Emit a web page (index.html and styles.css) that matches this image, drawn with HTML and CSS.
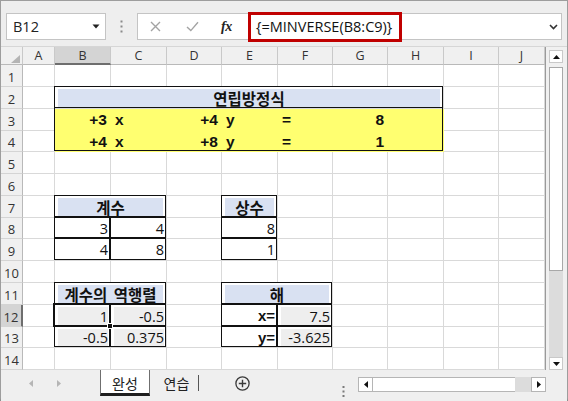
FILE: index.html
```html
<!DOCTYPE html>
<html lang="ko">
<head>
<meta charset="utf-8">
<link rel="stylesheet" href="styles.css">
</head>
<body>
<div class="window">
  <div class="toolbar">
    <div class="namebox"><span class="ref">B12</span>
      <svg class="nb-arrow" width="8" height="5" viewBox="0 0 8 5"><path d="M0.5 0.5H7.5L4 4.5Z" fill="#222"/></svg>
    </div>
    <div class="grip"><svg width="3" height="13" viewBox="0 0 3 13"><rect x="0.5" y="0.5" width="2" height="2" fill="#8a8a8a"/><rect x="0.5" y="5.5" width="2" height="2" fill="#8a8a8a"/><rect x="0.5" y="10.5" width="2" height="2" fill="#8a8a8a"/></svg></div>
    <div class="fnbox">
      <svg class="ic-x" width="11" height="11" viewBox="0 0 11 11"><path d="M1 1L10 10M10 1L1 10" stroke="#a3a3a3" stroke-width="1.4"/></svg>
      <svg class="ic-ok" width="13" height="11" viewBox="0 0 13 11"><path d="M1 6L4.8 9.6L12 1.2" stroke="#a3a3a3" stroke-width="1.4" fill="none"/></svg>
      <span class="fx">fx</span>
    </div>
    <div class="formula">
      <span class="ftext">{=MINVERSE(B8:C9)}</span>
      <svg class="f-arrow" width="9" height="6" viewBox="0 0 9 6"><path d="M1 1L4.5 4.5L8 1" stroke="#333" stroke-width="1.6" fill="none"/></svg>
    </div>
  </div>

  <div class="main">
    <div class="sheet">
      <!-- column headers -->
      <div class="corner"><svg width="22" height="18" viewBox="0 0 22 18"><path d="M19 8V16H10Z" fill="#b4b4b4"/></svg></div>
      <div class="ch">A</div><div class="ch sel">B</div><div class="ch">C</div><div class="ch">D</div><div class="ch">E</div><div class="ch">F</div><div class="ch">G</div><div class="ch">H</div><div class="ch">I</div><div class="ch">J</div>

      <!-- row 1 -->
      <div class="rh">1</div><div class="c"></div><div class="c"></div><div class="c"></div><div class="c"></div><div class="c"></div><div class="c"></div><div class="c"></div><div class="c"></div><div class="c"></div><div class="c"></div>
      <!-- row 2 -->
      <div class="rh">2</div><div class="c"></div><div class="c hd span7 bx">연립방정식</div><div class="c"></div><div class="c"></div>
      <!-- row 3 -->
      <div class="rh">3</div><div class="c"></div>
      <div class="c y eq r edge e-l">+3</div><div class="c y eq l">x</div><div class="c y eq r">+4</div><div class="c y eq l">y</div><div class="c y eq l">=</div><div class="c y eq r">8</div><div class="c y edge e-r"></div>
      <div class="c"></div><div class="c"></div>
      <!-- row 4 -->
      <div class="rh">4</div><div class="c"></div>
      <div class="c y eq r edge e-l e-b">+4</div><div class="c y eq l edge e-b">x</div><div class="c y eq r edge e-b">+8</div><div class="c y eq l edge e-b">y</div><div class="c y eq l edge e-b">=</div><div class="c y eq r edge e-b">1</div><div class="c y edge e-r e-b"></div>
      <div class="c"></div><div class="c"></div>
      <!-- row 5 -->
      <div class="rh">5</div><div class="c"></div><div class="c"></div><div class="c"></div><div class="c"></div><div class="c"></div><div class="c"></div><div class="c"></div><div class="c"></div><div class="c"></div><div class="c"></div>
      <!-- row 6 -->
      <div class="rh">6</div><div class="c"></div><div class="c"></div><div class="c"></div><div class="c"></div><div class="c"></div><div class="c"></div><div class="c"></div><div class="c"></div><div class="c"></div><div class="c"></div>
      <!-- row 7 -->
      <div class="rh">7</div><div class="c"></div><div class="c hd span2 bx">계수</div><div class="c"></div><div class="c hd bx">상수</div><div class="c"></div><div class="c"></div><div class="c"></div><div class="c"></div><div class="c"></div>
      <!-- row 8 -->
      <div class="rh">8</div><div class="c"></div><div class="c num r bx">3</div><div class="c num r bx">4</div><div class="c"></div><div class="c num r bx">8</div><div class="c"></div><div class="c"></div><div class="c"></div><div class="c"></div><div class="c"></div>
      <!-- row 9 -->
      <div class="rh">9</div><div class="c"></div><div class="c num r bx">4</div><div class="c num r bx">8</div><div class="c"></div><div class="c num r bx">1</div><div class="c"></div><div class="c"></div><div class="c"></div><div class="c"></div><div class="c"></div>
      <!-- row 10 -->
      <div class="rh">10</div><div class="c"></div><div class="c"></div><div class="c"></div><div class="c"></div><div class="c"></div><div class="c"></div><div class="c"></div><div class="c"></div><div class="c"></div><div class="c"></div>
      <!-- row 11 -->
      <div class="rh">11</div><div class="c"></div><div class="c hd span2 bx">계수의 역행렬</div><div class="c"></div><div class="c hd span2 bx">해</div><div class="c"></div><div class="c"></div><div class="c"></div><div class="c"></div>
      <!-- row 12 -->
      <div class="rh sel">12</div><div class="c"></div>
      <div class="c num r g bx">1<span class="selection"><span class="handle"></span></span></div>
      <div class="c num r g bx">-0.5</div><div class="c"></div><div class="c var r bx">x=</div><div class="c num r g bx">7.5</div><div class="c"></div><div class="c"></div><div class="c"></div><div class="c"></div>
      <!-- row 13 -->
      <div class="rh">13</div><div class="c"></div><div class="c num r g bx">-0.5</div><div class="c num r g bx">0.375</div><div class="c"></div><div class="c var r bx">y=</div><div class="c num r g bx">-3.625</div><div class="c"></div><div class="c"></div><div class="c"></div><div class="c"></div>
      <!-- row 14 -->
      <div class="rh">14</div><div class="c"></div><div class="c"></div><div class="c"></div><div class="c"></div><div class="c"></div><div class="c"></div><div class="c"></div><div class="c"></div><div class="c"></div><div class="c"></div>
    </div>

    <div class="vscroll">
      <div class="sbtn"><svg width="7" height="4" viewBox="0 0 7 4"><path d="M0 4H7L3.5 0Z" fill="#111"/></svg></div>
      <div class="vthumb"></div>
      <div class="vtrack"></div>
      <div class="sbtn"><svg width="7" height="4" viewBox="0 0 7 4"><path d="M0 0H7L3.5 4Z" fill="#111"/></svg></div>
    </div>
  </div>

  <div class="tabbar">
    <div class="navs">
      <svg width="4" height="7" viewBox="0 0 4 7"><path d="M4 0V7L0 3.5Z" fill="#b5b5b5"/></svg>
      <svg width="4" height="7" viewBox="0 0 4 7"><path d="M0 0V7L4 3.5Z" fill="#b5b5b5"/></svg>
    </div>
    <div class="tab active">완성</div>
    <div class="tab">연습</div>
    <div class="tsep"></div>
    <svg class="addsheet" width="15" height="15" viewBox="0 0 15 15"><circle cx="7.5" cy="7.5" r="6.6" stroke="#3a3a3a" stroke-width="1.3" fill="none"/><path d="M7.5 3.8V11.2M3.8 7.5H11.2" stroke="#3a3a3a" stroke-width="1.4"/></svg>
    <div class="tgrip"><svg width="3" height="11" viewBox="0 0 3 11"><rect x="0.5" y="0" width="2" height="2" fill="#7a7a7a"/><rect x="0.5" y="4.5" width="2" height="2" fill="#7a7a7a"/><rect x="0.5" y="9" width="2" height="2" fill="#7a7a7a"/></svg></div>
    <div class="hscroll">
      <div class="hbtn"><svg width="4" height="7" viewBox="0 0 4 7"><path d="M4 0V7L0 3.5Z" fill="#111"/></svg></div>
      <div class="hthumb"></div>
      <div class="htrack"></div>
      <div class="hbtn"><svg width="4" height="7" viewBox="0 0 4 7"><path d="M0 0V7L4 3.5Z" fill="#111"/></svg></div>
    </div>
  </div>
</div>
</body>
</html>
```

FILE: styles.css
```css
* { box-sizing: border-box; margin: 0; padding: 0; }
html, body { width: 568px; height: 401px; overflow: hidden; }
body { font-family: "Open Sans", "Noto Sans CJK KR", sans-serif; background: #fff; color: #111; }

.window {
  width: 568px; height: 401px;
  border: 1px solid #9d9d9d; border-bottom: 3px solid #8a8a8a;
  display: flex; flex-direction: column;
  background: #f0f0f0;
}

/* ---------- formula toolbar ---------- */
.toolbar {
  height: 46px; flex: none;
  display: flex; align-items: flex-start;
  padding: 12px 5px 0 5px;
  background: #eeeeee;
  border-bottom: 1px solid #d6d6d6;
}
.namebox {
  width: 100px; height: 27px;
  background: #fff; border: 1px solid #c4c4c4;
  display: flex; align-items: center; justify-content: space-between;
  padding: 0 5px 0 6px;
  font-size: 14.5px; color: #222;
}
.grip { width: 4px; height: 27px; margin-left: 14px; display: flex; align-items: center; }
.fnbox {
  width: 112px; height: 27px; margin-left: 13px; margin-right: -1px;
  background: #fff; border: 1px solid #c4c4c4;
  display: flex; align-items: center;
  padding-left: 12px;
}
.ic-ok { margin-left: 25px; }
.fx {
  margin-left: 22px;
  font-family: "Liberation Serif", serif; font-style: italic; font-weight: bold;
  font-size: 14px; color: #222; letter-spacing: -0.5px;
}
.formula {
  flex: 1; height: 27px;
  background: #fff; border: 1px solid #c4c4c4;
  display: flex; align-items: flex-start; justify-content: space-between;
  padding-right: 3px;
}
.ftext {
  height: 30px; margin: -2px 0 0 -1px;
  border: 3px solid #c00000;
  padding: 0 7px 0 5px;
  font-size: 14.5px; line-height: 24px; color: #111;
}
.f-arrow { align-self: center; }

/* ---------- sheet grid ---------- */
.main { height: 323px; flex: none; display: flex; }
.sheet {
  width: 544px; height: 323px;
  display: grid;
  grid-template-columns: 22px 32px 56px 56px 55px 56px 55px 55px 56px 55px 46px;
  grid-template-rows: 18px 22px 22px 22px 21px 22px 22px 22px 21px 22px 22px 22px 22px 21px 22px;
  background: #fff;
}
.corner, .ch {
  background: #f0f0f0;
  border-right: 1px solid #c9c9c9; border-bottom: 1px solid #b9b9b9;
}
.ch {
  font-size: 12.5px; color: #333;
  display: flex; align-items: center; justify-content: center;
}
.ch.sel { background: #d4d4d4; border-bottom: 2px solid #6e6e6e; }
.rh {
  background: #f0f0f0;
  border-right: 1px solid #b9b9b9; border-bottom: 1px solid #d4d4d4;
  font-size: 13px; color: #333;
  display: flex; align-items: center; justify-content: center;
  padding-top: 2px;
}
.rh.sel { background: #d4d4d4; border-right: 2px solid #6e6e6e; }

.c {
  border-right: 1px solid #d9d9d9; border-bottom: 1px solid #d9d9d9;
  display: flex; align-items: center;
  font-size: 15px; white-space: nowrap;
}
.c.r { justify-content: flex-end; padding-right: 2px; }
.c.l { justify-content: flex-start; padding-left: 3px; }
.span2 { grid-column: span 2; }
.span7 { grid-column: span 7; }

.hd {
  justify-content: center;
  font-family: "Noto Sans CJK KR", sans-serif; font-weight: bold; font-size: 15.5px;
  background: #d9e1f2; background-clip: content-box;
  padding: 2px 3px 1px 3px;
  line-height: 18px;
  word-spacing: 2px;
}
.y {
  background: #ffff70;
  border-right-color: #ffff70; border-bottom-color: #ffff70;
}
.eq { font-family: "Liberation Sans", sans-serif; font-weight: bold; font-size: 15.5px; padding-top: 1px; }
.eq.r { padding-right: 3px; }
.eq.l { padding-left: 4px; }
.num { font-family: "Open Sans", sans-serif; font-size: 14.5px; color: #111; }
.g { background: #eeeeee; background-clip: content-box; padding-top: 2px; padding-bottom: 1px; padding-left: 3px; }
.var { font-family: "Liberation Sans", sans-serif; font-weight: bold; font-size: 15px; padding-right: 3px; }

/* cell borders drawn over the gridlines */
.bx, .edge { position: relative; }
.bx::after, .edge::after {
  content: ""; position: absolute;
  top: -1px; left: -1px; right: 0; bottom: 0;
  border: 0 solid #111;
}
.bx::after { border-width: 1px; }
.e-l::after { border-left-width: 1px; }
.e-r::after { border-right-width: 1px; }
.e-b::after { border-bottom-width: 1px; }

.selection {
  position: absolute; z-index: 2;
  top: -2px; left: -2px; right: -1px; bottom: -1px;
  border: 2px solid #111;
}
.handle {
  position: absolute; right: -4px; bottom: -4px;
  width: 6px; height: 6px;
  background: #111; border: 1px solid #fff;
}

/* ---------- vertical scrollbar ---------- */
.vscroll {
  flex: 1;
  border-left: 1px solid #9a9a9a;
  background: #f0f0f0;
  display: flex; flex-direction: column;
  padding: 3px 4px 0 3px;
}
.sbtn {
  height: 13px; flex: none;
  background: #fff; border: 1px solid #c9c9c9;
  display: flex; align-items: center; justify-content: center;
}
.vthumb { height: 204px; flex: none; margin-top: 4px; background: #fff; border: 1px solid #a8a8a8; }
.vtrack { flex: 1; background: #dcdcdc; }

/* ---------- sheet tabs ---------- */
.tabbar {
  flex: 1;
  display: flex; align-items: flex-start;
  background: #efefef;
  font-family: "Noto Sans CJK KR", sans-serif;
}
.navs {
  width: 99px; height: 26px;
  display: flex; align-items: center;
  padding-left: 28px; gap: 24px;
}
.tab {
  width: 48px; height: 26px;
  display: flex; align-items: center; justify-content: center;
  font-size: 14px; color: #222;
  padding-left: 5px;
}
.tab.active {
  width: 50px; padding-left: 0;
  background: #fff;
  border-left: 1px solid #6f6f6f; border-right: 1px solid #6f6f6f;
  border-bottom: 3px solid #1e1e1e;
  padding-top: 2px;
}
.tsep { width: 1px; height: 16px; margin-top: 5px; background: #555; }
.addsheet { margin: 6px 0 0 36px; }
.tgrip { margin: 8px 0 0 92px; }
.hscroll {
  width: 188px; height: 15px;
  margin: 7px 0 0 13px;
  display: flex;
}
.hbtn {
  width: 15px; flex: none;
  background: #fff; border: 1px solid #b5b5b5;
  display: flex; align-items: center; justify-content: center;
}
.hthumb { width: 142px; background: #fff; border-top: 1px solid #b5b5b5; border-bottom: 1px solid #b5b5b5; }
.htrack { flex: 1; background: #dcdcdc; }
```
